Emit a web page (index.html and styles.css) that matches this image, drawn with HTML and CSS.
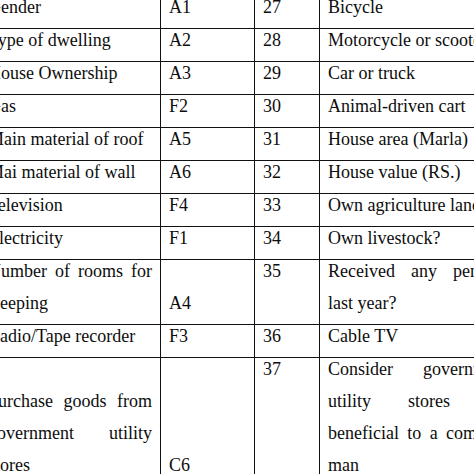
FILE: index.html
```html
<!DOCTYPE html>
<html lang="en">
<head>
<meta charset="utf-8">
<title>Variables table</title>
<link rel="stylesheet" href="styles.css">
</head>
<body>
<div class="sheet">
  <div class="cell c1"><div class="tx">Gender</div></div>
  <div class="cell c2"><div class="tx">A1</div></div>
  <div class="cell c3"><div class="tx">27</div></div>
  <div class="cell c4"><div class="tx">Bicycle</div></div>

  <div class="cell c1"><div class="tx">Type of dwelling</div></div>
  <div class="cell c2"><div class="tx">A2</div></div>
  <div class="cell c3"><div class="tx">28</div></div>
  <div class="cell c4"><div class="tx">Motorcycle or scooter</div></div>

  <div class="cell c1"><div class="tx">House Ownership</div></div>
  <div class="cell c2"><div class="tx">A3</div></div>
  <div class="cell c3"><div class="tx">29</div></div>
  <div class="cell c4"><div class="tx">Car or truck</div></div>

  <div class="cell c1"><div class="tx">Gas</div></div>
  <div class="cell c2"><div class="tx">F2</div></div>
  <div class="cell c3"><div class="tx">30</div></div>
  <div class="cell c4"><div class="tx">Animal-driven cart</div></div>

  <div class="cell c1"><div class="tx">Main material of roof</div></div>
  <div class="cell c2"><div class="tx">A5</div></div>
  <div class="cell c3"><div class="tx">31</div></div>
  <div class="cell c4"><div class="tx">House area (Marla)</div></div>

  <div class="cell c1"><div class="tx">Mai material of wall</div></div>
  <div class="cell c2"><div class="tx">A6</div></div>
  <div class="cell c3"><div class="tx">32</div></div>
  <div class="cell c4"><div class="tx">House value (RS.)</div></div>

  <div class="cell c1"><div class="tx">Television</div></div>
  <div class="cell c2"><div class="tx">F4</div></div>
  <div class="cell c3"><div class="tx">33</div></div>
  <div class="cell c4"><div class="tx">Own agriculture land?</div></div>

  <div class="cell c1"><div class="tx">Electricity</div></div>
  <div class="cell c2"><div class="tx">F1</div></div>
  <div class="cell c3"><div class="tx">34</div></div>
  <div class="cell c4"><div class="tx">Own livestock?</div></div>

  <div class="cell c1"><div class="tx">Number of rooms for sleeping</div></div>
  <div class="cell c2"><div class="tx">A4</div></div>
  <div class="cell c3"><div class="tx">35</div></div>
  <div class="cell c4"><div class="tx">Received any pension last year?</div></div>

  <div class="cell c1"><div class="tx">Radio/Tape recorder</div></div>
  <div class="cell c2"><div class="tx">F3</div></div>
  <div class="cell c3"><div class="tx">36</div></div>
  <div class="cell c4"><div class="tx">Cable TV</div></div>

  <div class="cell c1"><div class="tx">Purchase goods from government utility stores</div></div>
  <div class="cell c2"><div class="tx">C6</div></div>
  <div class="cell c3"><div class="tx">37</div></div>
  <div class="cell c4"><div class="tx">Consider government utility stores are beneficial to a common man</div></div>
</div>
</body>
</html>
```

FILE: styles.css
```css
html, body {
  margin: 0;
  padding: 0;
  background: #ffffff;
  overflow: hidden;
}

body {
  font-family: "Liberation Serif", "Times New Roman", serif;
  font-size: 18px;
  line-height: 32px;
  color: #0d0d0d;
}

.sheet {
  display: grid;
  grid-template-columns: 181px 94px 65px 198px;
  margin: -5px 0 0 -21px;
  width: max-content;
  border-top: 1px solid #111111;
  border-left: 1px solid #111111;
}

.cell {
  box-sizing: border-box;
  padding: 0 8px;
  border-right: 1px solid #111111;
  border-bottom: 1px solid #111111;
  display: flex;
  flex-direction: column;
}

.c1, .c2 {
  justify-content: flex-end;
}

.c3, .c4 {
  justify-content: flex-start;
}

.c1, .c4 {
  text-align: justify;
}

.tx {
  margin: -5px 0 5px 0;
}
```
